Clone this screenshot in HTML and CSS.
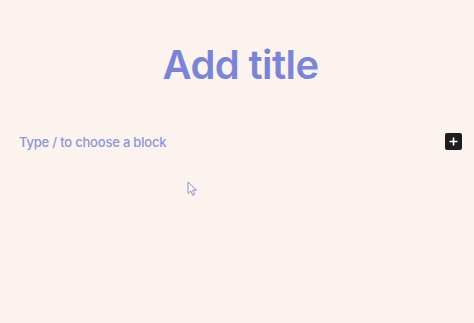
FILE: index.html
```html
<!DOCTYPE html>
<html lang="en">
<head>
  <meta charset="UTF-8">
  <meta name="viewport" content="width=device-width, initial-scale=1.0">
  <title>Editor</title>
  <link rel="stylesheet" href="styles.css">
</head>
<body>
  <div class="editor">
    <h1 class="post-title">Add title</h1>
    <div class="block-row">
      <p class="placeholder">Type / to choose a block</p>
      <button class="inserter" aria-label="Add block">
        <svg width="11" height="11" viewBox="0 0 11 11"><path d="M5.5 1.5v8M1.5 5.5h8" stroke="#fff" stroke-width="1.6"/></svg>
      </button>
    </div>
  </div>
  <svg class="cursor" width="12" height="16" viewBox="0 0 12 16">
    <path d="M1 1v11.5l2.8-2.6 2 4.4 1.8-.8-2-4.3H9.5z" fill="#fff" stroke="#8a8fc4" stroke-width="1" stroke-linejoin="round"/>
  </svg>
</body>
</html>
```

FILE: styles.css
```css
body {
  margin: 0;
  background-color: #fcf3ef;
  font-family: Inter, "DejaVu Sans", sans-serif;
  height: 100vh;
  position: relative;
  overflow: hidden;
}
.editor {
  padding: 40px 12px 0 19px;
}
.post-title {
  margin: 0;
  text-align: center;
  font-size: 40px;
  font-weight: 600;
  letter-spacing: -0.6px;
  color: #7b85d6;
  line-height: 50px;
}
.block-row {
  display: flex;
  align-items: center;
  justify-content: space-between;
  margin-top: 43px;
}
.placeholder {
  margin: 0;
  font-size: 13px;
  font-weight: 500;
  letter-spacing: -0.2px;
  color: #8e95d8;
}
.inserter {
  width: 17px;
  height: 17px;
  padding: 0;
  border: none;
  border-radius: 2px;
  background-color: #1e1e1e;
  display: flex;
  align-items: center;
  justify-content: center;
}
.cursor {
  position: absolute;
  left: 187px;
  top: 181px;
}
```
